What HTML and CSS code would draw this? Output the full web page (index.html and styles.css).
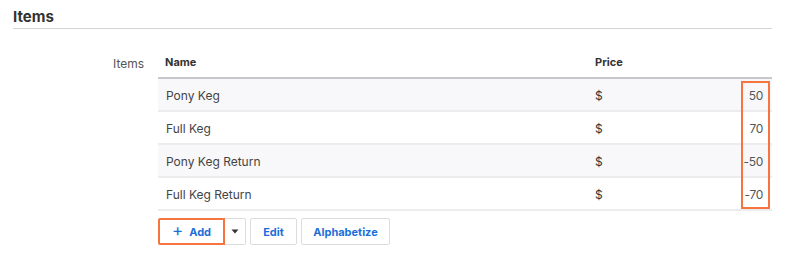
FILE: index.html
```html
<!DOCTYPE html>
<html>
<head>
<meta charset="utf-8">
<link rel="stylesheet" href="styles.css">
</head>
<body>
<section class="section">
  <h2 class="section-title">Items</h2>
  <div class="field">
    <div class="field-label">Items</div>
    <div class="field-body">
      <div class="table">
        <div class="row head">
          <div class="c-name">Name</div>
          <div class="c-price">Price</div>
        </div>
        <div class="row odd">
          <div class="c-name">Pony Keg</div>
          <div class="c-price"><span class="cur">$</span><span class="val">50</span></div>
        </div>
        <div class="row">
          <div class="c-name">Full Keg</div>
          <div class="c-price"><span class="cur">$</span><span class="val">70</span></div>
        </div>
        <div class="row odd">
          <div class="c-name">Pony Keg Return</div>
          <div class="c-price"><span class="cur">$</span><span class="val">-50</span></div>
        </div>
        <div class="row">
          <div class="c-name">Full Keg Return</div>
          <div class="c-price"><span class="cur">$</span><span class="val">-70</span></div>
        </div>
        <div class="highlight"></div>
      </div>
      <div class="actions">
        <div class="split">
          <button class="btn btn-add focus"><span class="plus">+</span>Add</button>
          <button class="btn btn-caret"><svg width="8" height="5" viewBox="0 0 8 5"><path d="M0.5 0.5h7L4 4.5z" fill="#333"/></svg></button>
        </div>
        <button class="btn btn-edit">Edit</button>
        <button class="btn btn-alpha">Alphabetize</button>
      </div>
    </div>
  </div>
</section>
</body>
</html>
```
FILE: styles.css
```css
* { box-sizing: border-box; }
body {
  margin: 0;
  background: #fff;
  font-family: Inter, "Noto Sans", sans-serif;
  color: #444;
}
.section {
  padding: 7px 29px 0 13px;
}
.section-title {
  margin: 0;
  font-size: 15px;
  font-weight: 700;
  color: #333;
  line-height: 20px;
  padding-bottom: 1px;
  border-bottom: 1px solid #d4d4d8;
}
.field {
  display: flex;
  padding-top: 21px;
}
.field-label {
  width: 145px;
  padding-left: 100px;
  font-size: 12px;
  line-height: 27px;
  color: #555;
}
.field-body {
  flex: 1;
}
.table {
  position: relative;
}
.row {
  display: flex;
  align-items: center;
  height: 33px;
  padding-top: 2px;
  border-bottom: 2px solid #ececee;
  font-size: 12px;
  color: #444;
}
.row.odd { background: #f8f8fa; }
.row.head {
  height: 29px;
  border-bottom: 2px solid #c8c8cc;
  font-weight: 700;
  font-size: 11px;
  color: #333;
  align-items: flex-start;
  padding-top: 5px;
}
.c-name {
  width: 437px;
  padding-left: 8px;
}
.row.head .c-name { padding-left: 7px; }
.c-price {
  flex: 1;
  display: flex;
  padding-right: 9px;
}
.cur { color: #333; }
.val {
  margin-left: auto;
  letter-spacing: -0.3px;
  color: #555;
}
.highlight {
  position: absolute;
  left: 583px;
  top: 31px;
  width: 29px;
  height: 128px;
  border: 2px solid #f6743e;
}
.actions {
  display: flex;
  gap: 4px;
  margin-top: 7px;
}
.split { display: flex; }
.btn {
  font-family: inherit;
  height: 27px;
  padding: 0 13px;
  background: #fff;
  border: 1px solid #dcdce0;
  border-radius: 2px;
  color: #1b6fd8;
  font-size: 11px;
  font-weight: 700;
  display: flex;
  align-items: center;
  justify-content: center;
  cursor: pointer;
}
.btn-edit { width: 47px; padding: 0; }
.btn-alpha { width: 89px; padding: 0; }
.btn-add {
  width: 67px;
  border-radius: 2px 0 0 2px;
}
.btn-add.focus { border: 2px solid #f6743e; }
.plus {
  font-size: 17px;
  font-weight: 400;
  margin-right: 6px;
  line-height: 1;
  margin-top: -2px;
}
.btn-caret {
  width: 21px;
  padding: 0;
  border-left: none;
  border-radius: 0 2px 2px 0;
}
```
